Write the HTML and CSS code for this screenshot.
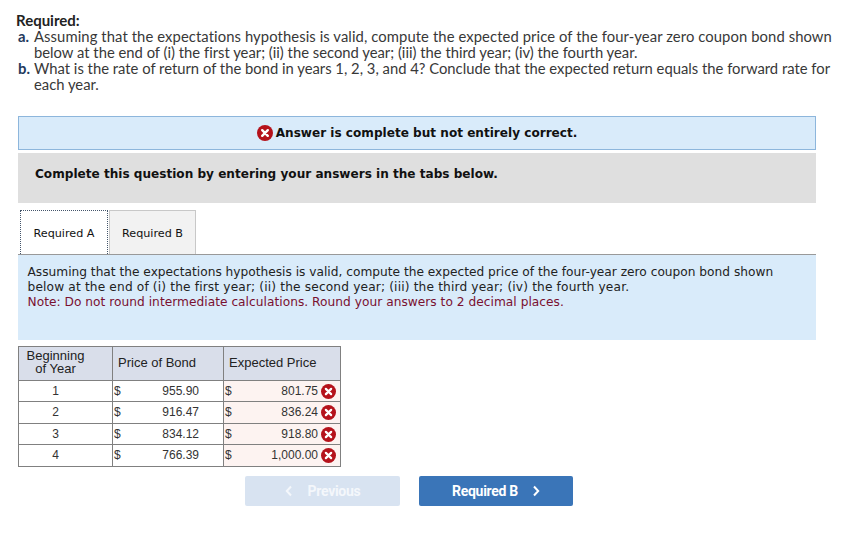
FILE: index.html
```html
<!DOCTYPE html>
<html lang="en">
<head>
<meta charset="utf-8">
<title>Required</title>
<link rel="stylesheet" href="styles.css">
</head>
<body>
<svg class="defs" width="0" height="0" aria-hidden="true">
  <symbol id="x-icon" viewBox="0 0 16 16">
    <circle cx="8" cy="8" r="8" fill="#b5121b"/>
    <path d="M5.2 5.2l5.6 5.6M10.8 5.2l-5.6 5.6" stroke="#fff" stroke-width="2.4" stroke-linecap="round"/>
  </symbol>
</svg>
<main class="page">
  <section class="req">
    <h2 class="req-title">Required:</h2>
    <ol class="req-list">
      <li><b class="req-mark">a.</b><span><span class="fit">Assuming that the expectations hypothesis is valid, compute the expected price of the four-year zero coupon bond shown</span> below at the end of (i) the first year; (ii) the second year; (iii) the third year; (iv) the fourth year.</span></li>
      <li><b class="req-mark">b.</b><span>What is the rate of return of the bond in years 1, 2, 3, and 4? Conclude that the expected return equals the forward rate for each year.</span></li>
    </ol>
  </section>

  <div class="alert"><svg class="alert-icon"><use href="#x-icon"/></svg>Answer is complete but not entirely correct.</div>
  <div class="instruct">Complete this question by entering your answers in the tabs below.</div>

  <div class="tabs">
    <div class="tab tab-active">Required A</div>
    <div class="tab">Required B</div>
  </div>

  <div class="panel">
    <p class="panel-text">Assuming that the expectations hypothesis is valid, compute the expected price of the four-year zero coupon bond shown <span class="stretch">below at the end of (i) the first year; (ii) the second year; (iii) the third year; (iv) the fourth year.</span><br><span class="note">Note: Do not round intermediate calculations. Round your answers to 2 decimal places.</span></p>
  </div>

  <table class="grid">
    <thead>
      <tr class="head-row"><th class="c-year">Beginning<br>of Year</th><th class="c-money">Price of Bond</th><th class="c-exp">Expected Price</th></tr>
    </thead>
    <tbody>
      <tr class="r1"><td class="year">1</td><td><div class="val"><span>$</span><span class="amt">955.90</span></div></td><td class="wrong"><div class="val"><span>$</span><span class="amt">801.75</span><svg class="cell-icon"><use href="#x-icon"/></svg></div></td></tr>
      <tr class="r2"><td class="year">2</td><td><div class="val"><span>$</span><span class="amt">916.47</span></div></td><td class="wrong"><div class="val"><span>$</span><span class="amt">836.24</span><svg class="cell-icon"><use href="#x-icon"/></svg></div></td></tr>
      <tr class="r3"><td class="year">3</td><td><div class="val"><span>$</span><span class="amt">834.12</span></div></td><td class="wrong"><div class="val"><span>$</span><span class="amt">918.80</span><svg class="cell-icon"><use href="#x-icon"/></svg></div></td></tr>
      <tr class="r4"><td class="year">4</td><td><div class="val"><span>$</span><span class="amt">766.39</span></div></td><td class="wrong"><div class="val"><span>$</span><span class="amt">1,000.00</span><svg class="cell-icon"><use href="#x-icon"/></svg></div></td></tr>
    </tbody>
  </table>

  <nav class="nav">
    <button class="btn btn-prev" type="button"><svg class="chev" viewBox="0 0 8 12"><path d="M6 1.5L1.8 6 6 10.5" fill="none" stroke="currentColor" stroke-width="2"/></svg>Previous</button>
    <button class="btn btn-next" type="button">Required B<svg class="chev" viewBox="0 0 8 12"><path d="M2 1.5L6.2 6 2 10.5" fill="none" stroke="currentColor" stroke-width="2"/></svg></button>
  </nav>
</main>
</body>
</html>
```
FILE: styles.css
```css
* { box-sizing: border-box; }
html, body { margin: 0; padding: 0; background: #fff; }
.defs { position: absolute; }
.page { width: 864px; height: 540px; padding: 12px 0 0 18px; overflow: hidden; display: flex; flex-direction: column; align-items: flex-start; }

.req { width: 820px; margin-left: -2px; font-family: "Lato", sans-serif; font-size: 14.8px; line-height: 16px; color: #383838; font-variant-ligatures: none; }
.req-title { margin: 0; font-size: 15px; line-height: 16px; font-weight: 700; color: #222; }
.req-list { list-style: none; margin: 0; padding: 0; }
.req-list li { display: flex; }
.req-mark { flex: none; width: 16px; margin-left: 2px; font-weight: 700; color: #1f3a5c; }
.fit { letter-spacing: 0.09px; }

.alert { width: 798px; height: 34px; margin-top: 24px; display: flex; align-items: center; justify-content: center; background: #d9ebfa; border: 1px solid #8db6dc; font: 700 12.08px/1 "DejaVu Sans", sans-serif; color: #111; }
.alert-icon { width: 16px; height: 16px; margin-right: 3px; }
.instruct { width: 798px; height: 50px; margin-top: 3px; padding: 13px 17px 0; background: #dfdfdf; font: 700 12.08px/16px "DejaVu Sans", sans-serif; color: #111; }

.tabs { display: flex; align-items: flex-end; width: 798px; height: 45px; margin-top: 7px; padding-left: 2px; gap: 1px; border-bottom: 1px solid #999; }
.tab { height: 44px; width: 87px; padding-top: 16px; text-align: center; font: 11.2px/13px "DejaVu Sans", sans-serif; color: #111; background: #f2f2f2; border: 1px solid #c8c8c8; border-bottom: 0; }
.tab-active { width: 88px; background: #fff; border: 1px dotted #44556a; border-bottom: 0; }

.panel { width: 798px; height: 85px; padding: 10px 40px 0 9.5px; background: #d9ebfa; }
.panel-text { margin: 0; font: 12.2px/15px "DejaVu Sans", sans-serif; color: #222; }
.stretch { letter-spacing: 0.15px; }
.note { color: #7a1030; letter-spacing: 0.03px; }

.grid { margin-top: 6px; width: 323px; table-layout: fixed; border-collapse: collapse; font: 12px/13px "Liberation Sans", sans-serif; color: #333; }
.grid th, .grid td { border: 1px solid #808080; padding: 0; }
.grid th { background: #d9deea; font-weight: 400; font-size: 13px; color: #222; height: 34px; text-align: left; padding: 0 0 2px 5px; }
.grid .c-year { text-align: center; padding: 0 20px 3px 0; }
.c-year { width: 94px; }
.c-money { width: 111px; }
.c-exp { width: 117px; }
.r1 td, .r3 td { height: 21px; }
.r2 td, .r4 td { height: 22px; }
.grid td.year { text-align: center; padding-right: 20px; }
.wrong { background: #fdf3f1; }
.val { display: flex; align-items: center; padding: 0 4px 0 1px; }
.amt { margin-left: auto; padding-right: 20px; }
.wrong .amt { padding-right: 0; }
.cell-icon { flex: none; width: 15px; height: 15px; margin-left: 3px; }

.nav { display: flex; gap: 19px; margin: 9px 0 0 227px; }
.btn { height: 30px; border: 0; border-radius: 2px; padding: 0 0 1px; display: flex; align-items: center; justify-content: center; font: 700 14px/1 "Roboto", sans-serif; letter-spacing: -0.3px; }
.btn-prev { width: 155px; background: #d8e3f1; color: #f4f7fb; gap: 15px; }
.btn-next { width: 154px; background: #3a75b8; color: #fff; gap: 14px; }
.chev { width: 8px; height: 12px; }
```
